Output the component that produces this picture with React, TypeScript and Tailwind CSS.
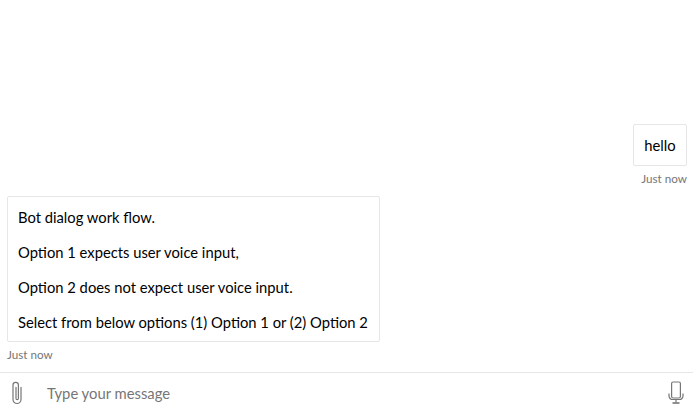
export default function App() {
  return (
    <div className="flex h-[413px] w-[693px] flex-col bg-white text-black font-['Lato','Open_Sans',sans-serif]">
      {/* Transcript */}
      <div className="flex flex-1 flex-col justify-end pl-[7px] pr-[6px]">
        <div className="flex flex-col items-end">
          <div className="flex h-[42px] w-[54px] items-center justify-center rounded-[2px] border border-[#e6e6e6] pt-[1px] text-[14.8px]">
            hello
          </div>
          <div className="mt-[5px] h-[15px] whitespace-nowrap text-[11.7px] leading-[14px] text-[#767676]">Just now</div>
        </div>
        <div className="mt-[10px] flex flex-col items-start">
          <div className="flex h-[146px] w-[373px] flex-col gap-[17px] rounded-[2px] border border-[#e6e6e6] px-[10px] pt-[11px] text-[14.75px] leading-[18px]">
            <p className="whitespace-nowrap">Bot dialog work flow.</p>
            <p className="whitespace-nowrap">Option 1 expects user voice input,</p>
            <p className="whitespace-nowrap">Option 2 does not expect user voice input.</p>
            <p className="whitespace-nowrap">Select from below options (1) Option 1 or (2) Option 2</p>
          </div>
          <div className="mt-[5px] h-[15px] whitespace-nowrap text-[11.7px] leading-[14px] text-[#767676]">Just now</div>
        </div>
        <div className="h-[10px]" />
      </div>
      {/* Send box */}
      <div className="flex h-[41px] items-center border-t border-[#e6e6e6]">
        <div className="flex w-[47px] justify-center pr-[13px]">
          <svg width="14" height="24" viewBox="0 0 14 24" fill="none" stroke="#767676" strokeWidth="1.2">
            <path d="M11 6v12.5a4 4 0 0 1-8 0V4a2.7 2.7 0 0 1 5.4 0v13.5a1.2 1.2 0 0 1-2.4 0V6" />
          </svg>
        </div>
        <div className="flex-1 pt-[1px] text-[14.8px] text-[#767676]">Type your message</div>
        <div className="flex w-[34px] justify-center">
          <svg width="16" height="24" viewBox="0 0 16 24" fill="none" stroke="#767676" strokeWidth="1.2">
            <rect x="3.6" y="1" width="8.8" height="16" rx="1.5" />
            <path d="M1 12.5v2.5a3.5 3.5 0 0 0 3.5 3.5h7A3.5 3.5 0 0 0 15 15v-2.5" />
            <path d="M8 18.5v3" />
            <path d="M4.5 22h7" strokeWidth="1.6" />
          </svg>
        </div>
      </div>
    </div>
  );
}
